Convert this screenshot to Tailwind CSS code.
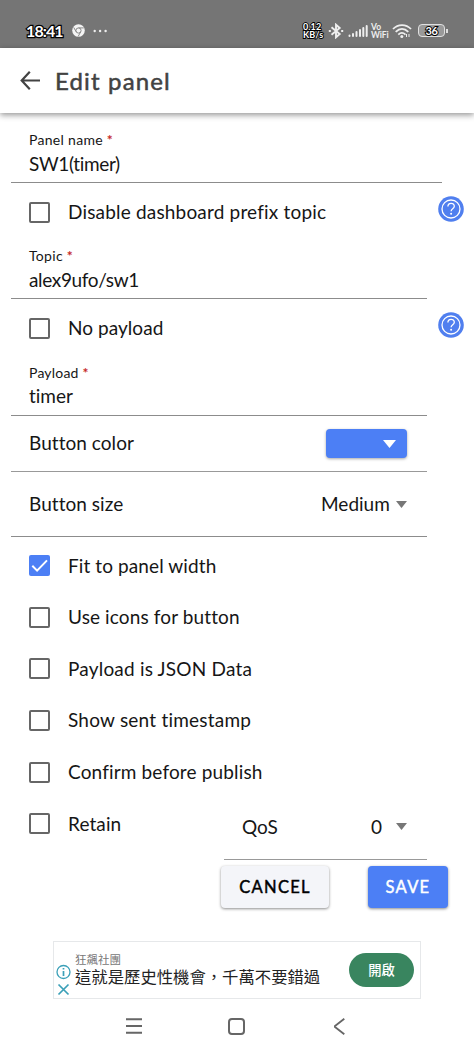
<!DOCTYPE html>
<html lang="en">
<head>
<meta charset="utf-8">
<title>Edit panel</title>
<script src="https://cdn.jsdelivr.net/npm/@tailwindcss/browser@4"></script>
</head>
<body class="w-[474px] h-[1053px] overflow-hidden bg-white text-[#161616] font-[Lato,'Noto_Sans_CJK_TC',sans-serif] text-[19px] whitespace-nowrap [font-variant-ligatures:none]">
<div class="flex flex-col h-[1053px]">
  <!-- Status bar -->
  <div class="h-12 shrink-0 bg-[#757575] flex items-center pt-[13px] text-white">
    <span class="ml-[26px] w-[46px] text-[16px] leading-4 font-bold tracking-[-0.9px] [paint-order:stroke] [-webkit-text-stroke:2.5px_#000]">18:41</span>
    <svg width="13" height="13" viewBox="0 0 13 13"><circle cx="6.5" cy="6.5" r="6.3" fill="#f4f4f4"/><g fill="none" stroke="#8a8a8a"><circle cx="6.5" cy="6.5" r="2.6"/><path d="M6.5 3.9h5.3M4.2 7.8 1.7 3.4M8.7 7.8 6.2 12.4"/></g></svg>
    <svg class="ml-2" width="15" height="4" viewBox="0 0 15 4" fill="#eee"><circle cx="1.7" cy="2" r="1.2"/><circle cx="7.1" cy="2" r="1.2"/><circle cx="12.6" cy="2" r="1.2"/></svg>
    <div class="ml-[195px] w-[23px] text-[9px] leading-[8px] font-bold tracking-[0.1px] [paint-order:stroke] [-webkit-text-stroke:1.8px_#000]"><div>0.12</div><div>KB/s</div></div>
    <svg class="ml-[2px]" width="16" height="16" viewBox="0 0 16 16" fill="none" stroke="#eee" stroke-width="1.9"><path d="M3.5 4.2 11.7 11 8 14.3V1.7L11.7 5 3.5 11.8"/><path d="M.8 8h2M13.2 8h2"/></svg>
    <svg class="ml-[4px]" width="21" height="14" viewBox="0 0 21 14" fill="#eee"><rect x=".5" y="10.5" width="2" height="2.5" rx="1"/><rect x="4" y="9" width="2" height="4" rx="1"/><rect x="7.5" y="7" width="2" height="6" rx="1"/><rect x="11" y="5" width="2" height="8" rx="1"/><rect x="14.3" y="3" width="2" height="10" rx="1"/><rect x="17.7" y="1" width="2" height="12" rx="1"/></svg>
    <div class="ml-[2px] w-[19px] text-[8.5px] leading-[8px] text-[#eee] tracking-[-0.1px] font-bold"><div>Vo</div><div>WiFi</div></div>
    <svg class="ml-[2px]" width="20" height="16" viewBox="0 0 20 16" fill="none" stroke="#eee" stroke-width="1.8"><path d="M1 6C6 .7 14 .7 19 6M3.7 8.9C7.6 5 12.4 5 16.3 8.9M6.3 11.6c2.1-2.1 5-2.1 7.2 0"/><circle cx="9.8" cy="13.6" r="1.5" fill="#eee" stroke="none"/><path stroke-width="1" d="M14.5 11v3M17 11v3"/></svg>
    <div class="ml-[6px] w-[27px] h-[13px] rounded-[4px] border-[1.5px] border-[#e0e0e0] bg-[#999] flex items-center justify-center text-[11px] leading-none font-bold tracking-[-0.3px]"><span class="[paint-order:stroke] [-webkit-text-stroke:2px_#000]">36</span></div>
    <div class="ml-px w-[2px] h-[4px] bg-[#ddd]"></div>
  </div>
  <!-- App bar -->
  <div class="h-[65px] shrink-0 flex items-center bg-white text-[#424242] shadow-[0_2px_6px_rgba(0,0,0,0.42)]">
    <svg class="ml-5" width="20" height="19" viewBox="0 0 20 19" fill="none" stroke="#424242" stroke-width="2.2"><path d="M9.8.8 1.7 9.5l8.1 8.7M1.7 9.5H20"/></svg>
    <h1 class="ml-[15px] text-[24px] font-normal tracking-[1.15px] [-webkit-text-stroke:0.5px]">Edit panel</h1>
  </div>
  <!-- Form -->
  <div class="ml-[11px] w-[431px] h-[70px] shrink-0 border-b border-[#8c8c8c] pl-[18px] pt-[18px]">
    <div class="text-[14px] leading-[18px] tracking-[0.3px]">Panel name <span class="text-[#c62828] font-bold">*</span></div>
    <div class="leading-6 mt-[3px] tracking-[-0.35px]">SW1(timer)</div>
  </div>
  <div class="h-[58px] shrink-0 flex items-center pl-[29px]">
    <div class="size-[21px] rounded-[2px] border-2 border-[#666]"></div>
    <div class="ml-[18px] w-[370px] tracking-[0.18px]">Disable dashboard prefix topic</div>
    <svg class="-mt-1.5" width="26" height="26" viewBox="0 0 26 26"><circle cx="13" cy="13" r="12.8" fill="#507fef"/><circle cx="13" cy="13" r="9" fill="none" stroke="#fff" stroke-width="1.3"/><path d="M9.9 10.6c0-4.3 6.4-4.1 6.4-.4 0 2.5-3.2 2.5-3.2 5" fill="none" stroke="#fff" stroke-width="1.3"/><circle cx="13.1" cy="17.8" r="1" fill="#fff"/></svg>
  </div>
  <div class="ml-[11px] w-[416px] h-[58px] shrink-0 border-b border-[#8c8c8c] pl-[18px] pt-[6px]">
    <div class="text-[14px] leading-[18px] tracking-[0.3px]">Topic <span class="text-[#c62828] font-bold">*</span></div>
    <div class="leading-6 mt-[3px] tracking-[-0.35px]">alex9ufo/sw1</div>
  </div>
  <div class="h-[58px] shrink-0 flex items-center pl-[29px]">
    <div class="size-[21px] rounded-[2px] border-2 border-[#666]"></div>
    <div class="ml-[18px] w-[370px] tracking-[0.05px]">No payload</div>
    <svg class="-mt-1.5" width="26" height="26" viewBox="0 0 26 26"><circle cx="13" cy="13" r="12.8" fill="#507fef"/><circle cx="13" cy="13" r="9" fill="none" stroke="#fff" stroke-width="1.3"/><path d="M9.9 10.6c0-4.3 6.4-4.1 6.4-.4 0 2.5-3.2 2.5-3.2 5" fill="none" stroke="#fff" stroke-width="1.3"/><circle cx="13.1" cy="17.8" r="1" fill="#fff"/></svg>
  </div>
  <div class="ml-[11px] w-[416px] h-[59px] shrink-0 border-b border-[#8c8c8c] pl-[18px] pt-[7px]">
    <div class="text-[14px] leading-[18px] tracking-[0.2px]">Payload <span class="text-[#c62828] font-bold">*</span></div>
    <div class="leading-6 mt-[2px]">timer</div>
  </div>
  <div class="ml-[11px] w-[416px] h-[56px] shrink-0 border-b border-[#999] pl-[18px] flex items-center justify-between pr-5">
    <div class="tracking-[0.05px]">Button color</div>
    <div class="w-[81px] h-[29px] rounded-[4px] bg-[#4c7ff5] shadow-[0_1px_3px_rgba(0,0,0,0.35)] flex items-center justify-end pr-[11px]"><svg width="13" height="8" viewBox="0 0 13 8"><path d="M0 0h13L6.5 8z" fill="#fff"/></svg></div>
  </div>
  <div class="ml-[11px] w-[416px] h-[65px] shrink-0 border-b border-[#8c8c8c] pl-[18px] flex items-center pr-5">
    <div class="tracking-[0.05px] w-[292px]">Button size</div>
    <div class="flex-1">Medium</div>
    <svg width="11" height="7" viewBox="0 0 11 7"><path d="M0 0h11L5.5 7z" fill="#777"/></svg>
  </div>
  <div class="pt-[3px] shrink-0 h-[323px] flex flex-col">
    <div class="h-[51.7px] flex items-center pl-[29px] gap-[18px]"><div class="size-[21px] rounded-[2px] bg-[#4c7ff5]"><svg width="21" height="21" viewBox="0 0 21 21" fill="none" stroke="#fff" stroke-width="2"><path d="m3.3 10.7 4.8 4.9L18 5.4"/></svg></div><span class="tracking-[0.1px]">Fit to panel width</span></div>
    <div class="h-[51.7px] flex items-center pl-[29px] gap-[18px]"><div class="size-[21px] rounded-[2px] border-2 border-[#666]"></div><span class="tracking-[0.12px]">Use icons for button</span></div>
    <div class="h-[51.7px] flex items-center pl-[29px] gap-[18px]"><div class="size-[21px] rounded-[2px] border-2 border-[#666]"></div><span class="tracking-[0.2px]">Payload is JSON Data</span></div>
    <div class="h-[51.7px] flex items-center pl-[29px] gap-[18px]"><div class="size-[21px] rounded-[2px] border-2 border-[#666]"></div><span class="tracking-[0.22px]">Show sent timestamp</span></div>
    <div class="h-[51.7px] flex items-center pl-[29px] gap-[18px]"><div class="size-[21px] rounded-[2px] border-2 border-[#666]"></div><span class="tracking-[0.15px]">Confirm before publish</span></div>
    <div class="flex">
      <div class="w-[224px] h-[51.7px] flex items-center pl-[29px] gap-[18px]"><div class="size-[21px] rounded-[2px] border-2 border-[#666]"></div><span class="tracking-[0.1px]">Retain</span></div>
      <div class="w-[203px] h-[62px] border-b border-[#999] flex items-center pl-[18px] pr-5 pb-[3px]"><span class="w-[129px]">QoS</span><span class="flex-1">0</span><svg width="11" height="7" viewBox="0 0 11 7"><path d="M0 0h11L5.5 7z" fill="#777"/></svg></div>
    </div>
  </div>
  <!-- Actions -->
  <div class="shrink-0 mt-[6px] pl-[221px] flex gap-[39px] text-[16.5px] font-normal tracking-[1.3px] [-webkit-text-stroke:0.45px]">
    <div class="w-[108px] h-[42px] rounded-[4px] bg-[#f4f5f9] text-black shadow-[0_1px_3px_rgba(0,0,0,0.45)] flex items-center justify-center">CANCEL</div>
    <div class="w-[80px] h-[42px] rounded-[4px] bg-[#4c7ff5] text-white shadow-[0_1px_3px_rgba(0,0,0,0.45)] flex items-center justify-center">SAVE</div>
  </div>
  <!-- Ad banner -->
  <div class="shrink-0 mt-[33px] ml-[53px] w-[368px] h-[58px] border border-[#e6e8ea] flex">
    <svg class="ml-[2px] mt-[22px]" width="15" height="32" viewBox="0 0 15 32" fill="none" stroke="#3ba0b8" stroke-width="1.3"><circle cx="7.5" cy="8" r="6.5"/><path d="M7.5 7v5M7.5 4v1.6" stroke-width="1.7"/><path d="m2.5 20.5 10 10M12.5 20.5l-10 10" stroke-width="1.7"/></svg>
    <div lang="zh-TW" class="ml-[4px] mt-[9px] w-[274px] font-['Noto_Sans_CJK_TC',sans-serif]">
      <div class="text-[11.5px] leading-4 text-[#777]">狂飆社團</div>
      <div class="text-[16.35px] leading-[19px] text-[#222]">這就是歷史性機會，千萬不要錯過</div>
    </div>
    <div lang="zh-TW" class="mt-[11px] w-[65px] h-[34px] rounded-full bg-[#39855f] text-white text-[13.3px] font-medium flex items-center justify-center font-['Noto_Sans_CJK_TC',sans-serif]">開啟</div>
  </div>
  <!-- Navigation bar -->
  <div class="shrink-0 h-[54px] flex items-center pl-[126px] text-[#666]">
    <svg width="16" height="16" viewBox="0 0 16 16" stroke="#666" stroke-width="1.9"><path d="M0 1.2h16M0 8h16M0 14.8h16"/></svg>
    <div class="ml-[86px] size-[17px] rounded-[4px] border-2 border-[#666]"></div>
    <svg class="ml-[89px]" width="11" height="17" viewBox="0 0 11 17" fill="none" stroke="#666" stroke-width="1.8" stroke-linejoin="round"><path d="m10.3.8-9.3 7.2q-.5.5 0 1l9.3 7.2"/></svg>
  </div>
</div>
</body>
</html>
